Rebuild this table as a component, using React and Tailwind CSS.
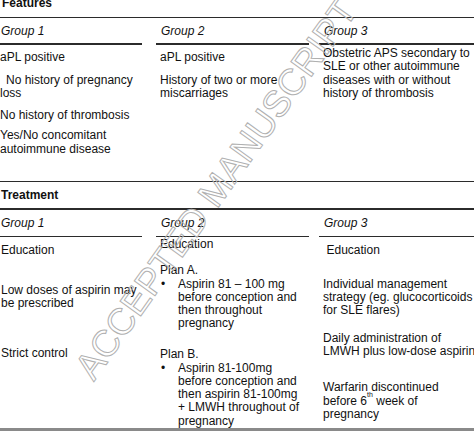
export default function App() {
  const line = "h-[1.5px] bg-[#2b2b2b]";
  return (
    <div className="relative w-[474px] h-[431px] overflow-hidden bg-white text-[12px] leading-[13.3px] text-[#111] font-['Liberation_Sans',Arial,sans-serif]">
      <div className="font-bold mt-[-3px] pl-[2px]">Features</div>
      <div className={`mt-[6.7px] ${line}`} />
      <div className="grid grid-cols-[156px_163px_155px]">
        <div>
          <div className="italic mt-[6.3px] pl-[1px]">Group 1</div>
          <div className={`mt-[5.4px] w-[142px] ${line}`} />
        </div>
        <div>
          <div className="italic mt-[6.3px] pl-[5px]">Group 2</div>
          <div className={`mt-[5.4px] w-[153px] ${line}`} />
        </div>
        <div>
          <div className="italic mt-[6.3px] pl-[5px]">Group 3</div>
          <div className={`mt-[5.4px] ${line}`} />
        </div>
      </div>
      <div className="grid grid-cols-[156px_163px_155px]">
        <div className="flex flex-col">
          <div className="mt-[6px]">aPL positive</div>
          <div className="mt-[9.4px] pl-[6px]">No history of pregnancy</div>
          <div>loss</div>
          <div className="mt-[9.1px]">No history of thrombosis</div>
          <div className="mt-[6.7px]">Yes/No concomitant<br />autoimmune disease</div>
        </div>
        <div className="flex flex-col pl-[4px]">
          <div className="mt-[6px]">aPL positive</div>
          <div className="mt-[9.4px]">History of two or more<br />miscarriages</div>
        </div>
        <div className="flex flex-col pl-[4px]">
          <div className="mt-[2px]">
            Obstetric APS secondary to<br />SLE or other autoimmune<br />diseases with or without<br />history of thrombosis
          </div>
        </div>
      </div>
      <div className={`mt-[25px] ${line}`} />
      <div className="font-bold mt-[6.9px] pl-[1px]">Treatment</div>
      <div className={`mt-[5.8px] ${line}`} />
      <div className="grid grid-cols-[156px_163px_155px]">
        <div>
          <div className="italic mt-[6.7px] pl-[1px]">Group 1</div>
          <div className={`mt-[6px] w-[142px] ${line}`} />
        </div>
        <div>
          <div className="italic mt-[6.7px] pl-[5px]">Group 2</div>
          <div className={`mt-[6px] w-[153px] ${line}`} />
        </div>
        <div>
          <div className="italic mt-[6.7px] pl-[5px]">Group 3</div>
          <div className={`mt-[6px] ${line}`} />
        </div>
      </div>
      <div className="grid grid-cols-[156px_163px_155px]">
        <div className="flex flex-col">
          <div className="mt-[6.9px] pl-[1px]">Education</div>
          <div className="mt-[26px] pl-[1px]">Low doses of aspirin may<br />be prescribed</div>
          <div className="mt-[36.4px] pl-[1px]">Strict control</div>
        </div>
        <div className="flex flex-col pl-[4px]">
          <div className="mt-[0.2px]">Education</div>
          <div className="mt-[12.7px]">Plan A.</div>
          <div className="mt-[0.7px] flex">
            <span className="w-[18px] shrink-0 pl-[1px]">•</span>
            <span>Aspirin 81 – 100 mg<br />before conception and<br />then throughout<br />pregnancy</span>
          </div>
          <div className="mt-[16.8px]">Plan B.</div>
          <div className="mt-[0.7px] flex">
            <span className="w-[18px] shrink-0 pl-[1px]">•</span>
            <span>Aspirin 81-100mg<br />before conception and<br />then aspirin 81-100mg<br />+ LMWH throughout of<br />pregnancy</span>
          </div>
        </div>
        <div className="flex flex-col pl-[4px]">
          <div className="mt-[6.2px] pl-[3.5px]">Education</div>
          <div className="mt-[20.7px]">Individual management<br />strategy (eg. glucocorticoids<br />for SLE flares)</div>
          <div className="mt-[14.4px] whitespace-nowrap">Daily administration of<br />LMWH plus low-dose aspirin</div>
          <div className="mt-[22.4px]">
            Warfarin discontinued<br />before 6<sup className="text-[7px] align-super leading-none">th</sup> week of<br />pregnancy
          </div>
        </div>
      </div>
      <div className="h-[3px] bg-[#8a8a8a]" />
      <div className="pointer-events-none absolute left-[216px] top-[189px] -translate-x-1/2 -translate-y-1/2 rotate-[-54.5deg] whitespace-nowrap text-[37px] leading-none text-transparent [-webkit-text-stroke:1px_#b0b0b0]">
        ACCEPTED MANUSCRIPT
      </div>
    </div>
  );
}
